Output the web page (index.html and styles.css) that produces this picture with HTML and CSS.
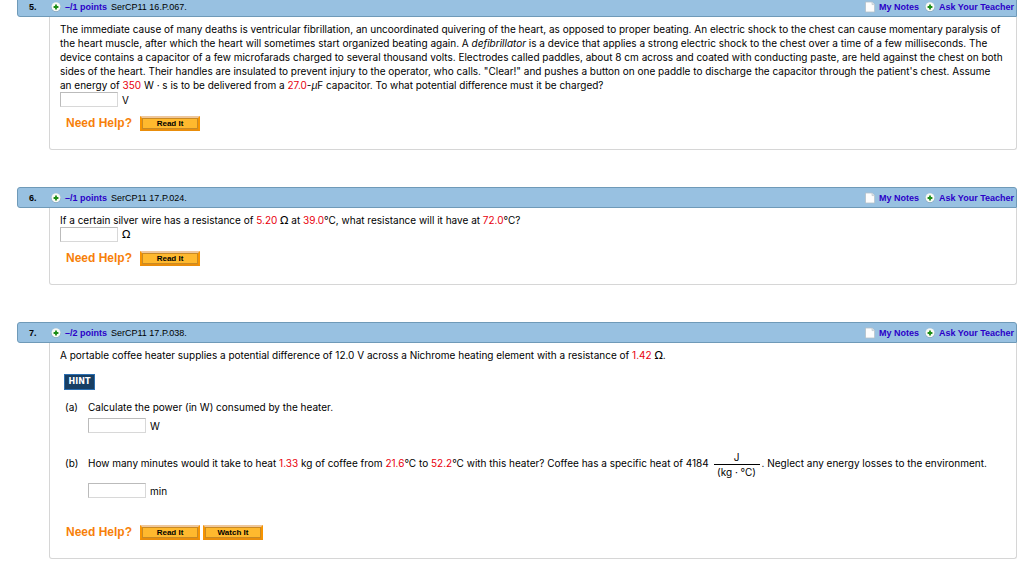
FILE: index.html
```html
<!DOCTYPE html>
<html lang="en">
<head>
<meta charset="utf-8">
<title>Assignment</title>
<link rel="stylesheet" href="styles.css">
</head>
<body>
<svg class="symbols" aria-hidden="true">
  <symbol id="plus" viewBox="0 0 10 10">
    <circle cx="5" cy="5.2" r="4.7" fill="#7f9fb5"/>
    <circle cx="5" cy="4.8" r="4.5" fill="#f8faf5"/>
    <path d="M5 2.600v4.800M2.600 5h4.800" stroke="#1b8c14" stroke-width="1.800"/>
  </symbol>
  <symbol id="note" viewBox="0 0 10 12">
    <path d="M.5 1h6.7L9.600 3.400V11H.5z" fill="#fdfdfd" stroke="#b3bfc8" stroke-width=".8"/>
    <path d="M7 1v2.600h2.600" fill="#dfe4e8" stroke="#b3bfc8" stroke-width=".6"/>
  </symbol>
</svg>
<main class="assignment">
  <section class="question">
    <header class="bar">
      <span class="number">5.</span>
      <a class="points" href="#"><svg class="plus"><use href="#plus"/></svg>–/1 points</a>
      <span class="source">SerCP11 16.P.067.</span>
      <nav class="tools">
        <a href="#"><svg class="note"><use href="#note"/></svg>My Notes</a>
        <a href="#"><svg class="plus"><use href="#plus"/></svg>Ask Your Teacher</a>
      </nav>
    </header>
    <div class="body">
      <p class="text">The immediate cause of many deaths is ventricular fibrillation, an uncoordinated quivering of the heart, as opposed to proper beating. An electric shock to the chest can cause momentary paralysis of the heart muscle, after which the heart will sometimes start organized beating again. A <i>defibrillator</i> is a device that applies a strong electric shock to the chest over a time of a few milliseconds. The device contains a capacitor of a few microfarads charged to several thousand volts. Electrodes called paddles, about 8 cm across and coated with conducting paste, are held against the chest on both sides of the heart. Their handles are insulated to prevent injury to the operator, who calls. "Clear!" and pushes a button on one paddle to discharge the capacitor through the patient's chest. Assume an&nbsp;energy of <span class="value">350</span> W&nbsp;·&nbsp;s is to be delivered from a <span class="value">27.0</span>-<i>μ</i>F capacitor. To what potential difference must it be charged?</p>
      <label class="answer"><input type="text">V</label>
      <div class="help"><span class="help-title">Need Help?</span><button type="button">Read It</button></div>
    </div>
  </section>

  <section class="question">
    <header class="bar">
      <span class="number">6.</span>
      <a class="points" href="#"><svg class="plus"><use href="#plus"/></svg>–/1 points</a>
      <span class="source">SerCP11 17.P.024.</span>
      <nav class="tools">
        <a href="#"><svg class="note"><use href="#note"/></svg>My Notes</a>
        <a href="#"><svg class="plus"><use href="#plus"/></svg>Ask Your Teacher</a>
      </nav>
    </header>
    <div class="body">
      <p class="text">If a certain silver wire has a resistance of <span class="value">5.20</span> <span class="ohm">Ω</span> at <span class="value">39.0</span>°C, what resistance will it have at <span class="value">72.0</span>°C?</p>
      <label class="answer"><input type="text"><span class="ohm">Ω</span></label>
      <div class="help"><span class="help-title">Need Help?</span><button type="button">Read It</button></div>
    </div>
  </section>

  <section class="question">
    <header class="bar">
      <span class="number">7.</span>
      <a class="points" href="#"><svg class="plus"><use href="#plus"/></svg>–/2 points</a>
      <span class="source">SerCP11 17.P.038.</span>
      <nav class="tools">
        <a href="#"><svg class="note"><use href="#note"/></svg>My Notes</a>
        <a href="#"><svg class="plus"><use href="#plus"/></svg>Ask Your Teacher</a>
      </nav>
    </header>
    <div class="body">
      <p class="text">A portable coffee heater supplies a potential difference of 12.0 V across a Nichrome heating element with a resistance of <span class="value">1.42</span> <span class="ohm">Ω</span>.</p>
      <a class="hint" href="#">HINT</a>
      <div class="part">
        <span>(a)</span>
        <div>
          <p class="text">Calculate the power (in W) consumed by the heater.</p>
          <label class="answer"><input type="text">W</label>
        </div>
      </div>
      <div class="part part-fraction">
        <span>(b)</span>
        <div>
          <p class="text">How many minutes would it take to heat <span class="value">1.33</span> kg of coffee from <span class="value">21.6</span>°C to <span class="value">52.2</span>°C with this heater? Coffee has a specific heat of 4184 <span class="fraction"><span>J</span><span class="denominator">(kg · °C)</span></span>. Neglect any energy losses to the environment.</p>
          <label class="answer"><input type="text">min</label>
        </div>
      </div>
      <div class="help help-after-parts"><span class="help-title">Need Help?</span><button type="button">Read It</button><button type="button">Watch It</button></div>
    </div>
  </section>
</main>
</body>
</html>
```
FILE: styles.css
```css
* {
  box-sizing: border-box;
}

body {
  margin: 0;
  background: #fff;
  color: #000;
  font: 10px/14px Inter, Verdana, sans-serif;
}

p {
  margin: 0;
}

a {
  color: #2b00c8;
  text-decoration: none;
}

.symbols {
  display: none;
}

/* The list starts scrolled slightly under the top edge. */
.assignment {
  display: flex;
  flex-direction: column;
  gap: 37px;
  margin: -4px 7px 0 17px;
}

.bar {
  display: flex;
  align-items: center;
  height: 21px;
  padding: 0 2px 0 11px;
  border: 1px solid #6f9ab8;
  border-radius: 3px 3px 0 3px;
  background: #98c1e1;
  font: 9px/12px Arial, "Liberation Sans", sans-serif;
}

.number {
  width: 22px;
  font-weight: bold;
}

.points,
.tools a {
  display: flex;
  align-items: center;
  gap: 4px;
  font-weight: bold;
}

.source {
  margin-left: 4px;
}

.tools {
  display: flex;
  gap: 6px;
  margin-left: auto;
}

.plus {
  width: 10px;
  height: 10px;
}

.note {
  width: 10px;
  height: 12px;
}

.body {
  margin-left: 32px;
  padding: 5px 10px 18px;
  border: 1px solid #d6d6d6;
  border-top: 0;
  border-radius: 0 0 3px 3px;
}

.value {
  color: #e8000d;
}

.ohm {
  font: 11px/10px "DejaVu Sans", sans-serif;
}

.answer {
  display: flex;
  align-items: center;
  gap: 4px;
}

.answer input {
  width: 58px;
  height: 15px;
  padding: 0 2px;
  border: 1px solid #d8d8d8;
  border-top-color: #bbb;
  border-left-color: #bbb;
  background: #fff;
  font: inherit;
}

.help {
  display: flex;
  align-items: center;
  gap: 3px;
  margin: 9px 0 0 6px;
}

.help-after-parts {
  margin-top: 27px;
}

.help-title {
  margin-right: 5px;
  color: #f77f0a;
  font: bold 12px/15px Arial, "Liberation Sans", sans-serif;
}

.help button {
  width: 60px;
  height: 15px;
  padding: 0;
  border: 2px solid #f79400;
  border-top-color: #efc79a;
  border-bottom-color: #e98d0b;
  background: #ffb92e;
  box-shadow: inset 0 0 0 1px #c98a24;
  color: #000;
  font: bold 8px/9px Arial, "Liberation Sans", sans-serif;
}

.hint {
  display: block;
  width: 31px;
  margin: 12px 0 0 4px;
  border: 1px solid #2a6db0;
  background: #173e63;
  color: #fff;
  font: bold 8px/14px Verdana, "DejaVu Sans", sans-serif;
  text-align: center;
}

.part {
  display: grid;
  grid-template-columns: 18px 1fr;
  column-gap: 5px;
  margin: 10px 0 0 5px;
}

.part .answer {
  margin-top: 4px;
}

.part-fraction {
  align-items: baseline;
  margin-top: 17px;
}

.fraction {
  display: inline-flex;
  flex-direction: column;
  width: 46px;
  margin: 0 2px;
  vertical-align: middle;
  text-align: center;
}

.denominator {
  border-top: 1px solid #000;
}
```
